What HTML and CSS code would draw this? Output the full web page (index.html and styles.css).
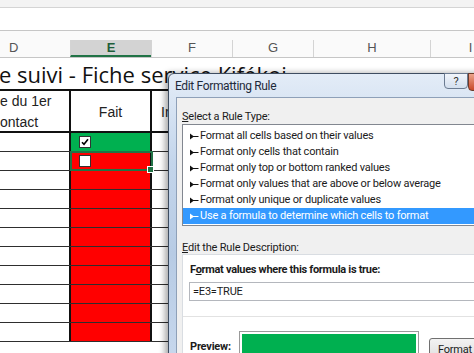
FILE: index.html
```html
<!DOCTYPE html>
<html lang="fr">
<head>
    <meta charset="UTF-8">
    <title>Edit Formatting Rule</title>
    <link rel="stylesheet" href="styles.css">
</head>
<body>
    <div class="sheet">
        <div class="ribbon-edge"></div>
        <div class="formula-bar"></div>

        <!-- column letters -->
        <div class="col-heads">
            <div class="ch ch-d">D</div>
            <div class="ch ch-e">E</div>
            <div class="ch ch-f">F</div>
            <div class="ch ch-g">G</div>
            <div class="ch ch-h">H</div>
            <div class="ch ch-i">I</div>
        </div>

        <div class="title-row">e suivi - Fiche service Kifékoi</div>

        <div class="hdr-row">
            <div class="cell c-d">e du 1er<br>ontact</div>
            <div class="cell c-e">Fait</div>
            <div class="cell c-f">In</div>
        </div>

        <div class="row">
            <div class="cell c-d"></div>
            <div class="cell c-e green">
                <span class="box">
                    <svg width="8" height="8" viewBox="0 0 8 8"><path d="M1 4.2 L3 6.3 L7 1.2" fill="none" stroke="#000" stroke-width="1.6"/></svg>
                </span>
            </div>
            <div class="cell c-f"></div>
        </div>
        <div class="row">
            <div class="cell c-d"></div>
            <div class="cell c-e red selected"><span class="box"></span><span class="handle"></span></div>
            <div class="cell c-f"></div>
        </div>
        <div class="row"><div class="cell c-d"></div><div class="cell c-e red"></div><div class="cell c-f"></div></div>
        <div class="row"><div class="cell c-d"></div><div class="cell c-e red"></div><div class="cell c-f"></div></div>
        <div class="row"><div class="cell c-d"></div><div class="cell c-e red"></div><div class="cell c-f"></div></div>
        <div class="row"><div class="cell c-d"></div><div class="cell c-e red"></div><div class="cell c-f"></div></div>
        <div class="row"><div class="cell c-d"></div><div class="cell c-e red"></div><div class="cell c-f"></div></div>
        <div class="row"><div class="cell c-d"></div><div class="cell c-e red"></div><div class="cell c-f"></div></div>
        <div class="row"><div class="cell c-d"></div><div class="cell c-e red"></div><div class="cell c-f"></div></div>
        <div class="row"><div class="cell c-d"></div><div class="cell c-e red"></div><div class="cell c-f"></div></div>
        <div class="row"><div class="cell c-d"></div><div class="cell c-e red"></div><div class="cell c-f"></div></div>
    </div>

    <!-- dialog over the sheet -->
    <div class="dialog">
        <div class="dlg-title">Edit Formatting Rule</div>
        <div class="dlg-help">?</div>
        <div class="dlg-close"></div>

        <div class="dlg-body">
            <div class="dlg-label"><u>S</u>elect a Rule Type:</div>
            <div class="rule-list">
                <div class="rule"><svg class="arr" width="9" height="7" viewBox="0 0 9 7"><path d="M0 0.5 L4 3.5 L0 6.5 Z M3 3 H8.5 V4 H3 Z" fill="#111"/></svg>Format all cells based on their values</div>
                <div class="rule"><svg class="arr" width="9" height="7" viewBox="0 0 9 7"><path d="M0 0.5 L4 3.5 L0 6.5 Z M3 3 H8.5 V4 H3 Z" fill="#111"/></svg>Format only cells that contain</div>
                <div class="rule"><svg class="arr" width="9" height="7" viewBox="0 0 9 7"><path d="M0 0.5 L4 3.5 L0 6.5 Z M3 3 H8.5 V4 H3 Z" fill="#111"/></svg>Format only top or bottom ranked values</div>
                <div class="rule"><svg class="arr" width="9" height="7" viewBox="0 0 9 7"><path d="M0 0.5 L4 3.5 L0 6.5 Z M3 3 H8.5 V4 H3 Z" fill="#111"/></svg>Format only values that are above or below average</div>
                <div class="rule"><svg class="arr" width="9" height="7" viewBox="0 0 9 7"><path d="M0 0.5 L4 3.5 L0 6.5 Z M3 3 H8.5 V4 H3 Z" fill="#111"/></svg>Format only unique or duplicate values</div>
                <div class="rule active"><svg class="arr" width="9" height="7" viewBox="0 0 9 7"><path d="M0 0.5 L4 3.5 L0 6.5 Z M3 3 H8.5 V4 H3 Z" fill="#fff"/></svg>Use a formula to determine which cells to format</div>
            </div>

            <div class="dlg-label second"><u>E</u>dit the Rule Description:</div>
            <div class="desc">
                <div class="desc-label">F<u>o</u>rmat values where this formula is true:</div>
                <div class="formula-input">=E3=TRUE</div>
                <div class="sep"></div>
                <div class="preview-row">
                    <div class="preview-label">Preview:</div>
                    <div class="preview-box"><div class="preview-fill"></div></div>
                    <div class="btn">Format</div>
                </div>
            </div>
        </div>
    </div>
</body>
</html>
```

FILE: styles.css
```css
body {
    margin: 0;
    width: 474px;
    height: 353px;
    overflow: hidden;
    position: relative;
    background-color: #fff;
    font-family: "Liberation Sans", Arial, sans-serif;
}

.sheet {
    width: 474px;
}

.ribbon-edge {
    height: 7px;
    background-color: #f3f3f3;
    border-bottom: 1px solid #d4d4d4;
}

.formula-bar {
    height: 22px;
    background-color: #fff;
    border-bottom: 1px solid #c6c6c6;
}

/* column letters */
.col-heads {
    display: flex;
    align-items: flex-end;
    height: 26px;
    background-color: #fafafa;
    border-bottom: 1px solid #c6c6c6;
}

.ch {
    flex: none;
    height: 17px;
    line-height: 16px;
    text-align: center;
    font-size: 13px;
    color: #555;
    border-left: 1px solid #d4d4d4;
    box-sizing: border-box;
}

.ch-d {
    width: 70px;
    border-left: none;
    text-align: left;
    padding-left: 9px;
}

.ch-e {
    width: 81px;
    background-color: #d3d3d3;
    border-bottom: 2px solid #217346;
    color: #1e5e3a;
    font-weight: bold;
}

.ch-f, .ch-g {
    width: 81px;
}

.ch-h {
    width: 117px;
}

.ch-i {
    width: 80px;
}

.title-row {
    height: 31px;
    line-height: 32px;
    font-family: "Open Sans", sans-serif;
    font-size: 22px;
    color: #111;
    white-space: nowrap;
    margin-left: -1px;
}

/* table */
.hdr-row, .row {
    display: flex;
    box-sizing: border-box;
}

.hdr-row {
    height: 44px;
    border-top: 2px solid #111;
    border-bottom: 2px solid #111;
}

.row {
    height: 19px;
    border-bottom: 1px solid #2e2e2e;
}

.cell {
    flex: none;
    box-sizing: border-box;
    position: relative;
}

.c-d {
    width: 71px;
    border-right: 2px solid #111;
}

.c-e {
    width: 81px;
    border-right: 2px solid #111;
}

.c-f {
    width: 60px;
}

.hdr-row .cell {
    font-size: 14px;
    color: #222;
}

.hdr-row .c-d {
    line-height: 21px;
    white-space: nowrap;
    overflow: hidden;
}

.hdr-row .c-e {
    text-align: center;
    line-height: 42px;
}

.hdr-row .c-f {
    line-height: 42px;
    padding-left: 9px;
}

.green {
    background-color: #00b050;
}

.red {
    background-color: #ff0000;
}

.box {
    position: absolute;
    left: 8px;
    top: 3px;
    width: 10px;
    height: 10px;
    background-color: #fff;
    border: 1px solid #333;
    display: flex;
    align-items: center;
    justify-content: center;
}

.selected {
    outline: 2px solid #217346;
    outline-offset: -1px;
    z-index: 1;
}

.handle {
    position: absolute;
    right: -4px;
    bottom: -3px;
    width: 5px;
    height: 5px;
    background-color: #217346;
    border: 1px solid #fff;
}

/* dialog */
.dialog {
    position: absolute;
    left: 168px;
    top: 73px;
    width: 330px;
    height: 300px;
    border: 1px solid #3e4d61;
    border-radius: 6px 0 0 0;
    background: linear-gradient(180deg, #e3ecf7 0%, #c3d5eb 30%, #b7cbe4 60%, #c9d9ee 100%);
    box-shadow: -3px 0 6px rgba(0, 0, 0, 0.35);
    font-family: Roboto, "Open Sans", sans-serif;
    color: #1b1b1b;
}

.dlg-title {
    height: 23px;
    line-height: 25px;
    padding-left: 6px;
    font-size: 12px;
    letter-spacing: -0.35px;
    color: #1e2a3a;
}

.dlg-help {
    position: absolute;
    left: 275px;
    top: -1px;
    width: 24px;
    height: 16px;
    box-sizing: border-box;
    border: 1px solid #6b7b91;
    border-radius: 0 0 4px 4px;
    background: linear-gradient(180deg, #f1f5fb, #d3dfee);
    text-align: center;
    font-size: 11px;
    line-height: 15px;
    color: #333;
}

.dlg-close {
    position: absolute;
    left: 299px;
    top: -1px;
    width: 44px;
    height: 16px;
    border: 1px solid #6b3a2a;
    border-radius: 0 0 4px 4px;
    background: linear-gradient(180deg, #eca58c, #c9472a);
}

.dlg-body {
    margin-left: 7px;
    height: 270px;
    background-color: #f0f0f0;
    border: 1px solid #8ea0b8;
    padding: 12px 0 0 5px;
    box-sizing: border-box;
    font-size: 11px;
    letter-spacing: -0.2px;
}

.dlg-label {
    height: 14px;
    line-height: 14px;
}

.dlg-label.second {
    margin-top: 15px;
    height: 13px;
}

.rule-list {
    height: 102px;
    box-sizing: border-box;
    border: 1px solid #828790;
    background-color: #fff;
    padding-top: 3px;
}

.rule {
    height: 16px;
    line-height: 16px;
    padding-left: 7px;
    display: flex;
    align-items: center;
    white-space: nowrap;
}

.arr {
    margin-right: 1px;
    flex: none;
}

.rule.active {
    background-color: #3399ff;
    color: #fff;
}

.desc {
    height: 120px;
    background-color: #fff;
    border: 1px solid #d9dde2;
    padding: 8px 0 0 7px;
    box-sizing: border-box;
}

.desc-label {
    font-weight: bold;
    height: 14px;
    line-height: 14px;
    letter-spacing: -0.3px;
}

.formula-input {
    margin: 5px 0 0 -1px;
    height: 19px;
    box-sizing: border-box;
    border: 1px solid #b4b7bd;
    line-height: 17px;
    padding-left: 3px;
}

.sep {
    margin: 15px 0 0 -7px;
    height: 1px;
    background-color: #e2e2e2;
}

.preview-row {
    display: flex;
    margin-top: 14px;
}

.preview-label {
    font-weight: bold;
    width: 49px;
    padding-top: 9px;
    line-height: 14px;
}

.preview-box {
    width: 180px;
    height: 32px;
    box-sizing: border-box;
    border: 1px solid #9a9a9a;
    padding: 2px;
    background-color: #fff;
}

.preview-fill {
    height: 100%;
    background-color: #00b050;
}

.btn {
    margin: 7px 0 0 10px;
    width: 62px;
    height: 24px;
    box-sizing: border-box;
    border: 1px solid #707070;
    border-radius: 3px;
    background: linear-gradient(180deg, #f3f3f3, #dcdcdc);
    padding-left: 8px;
    line-height: 22px;
}
```
